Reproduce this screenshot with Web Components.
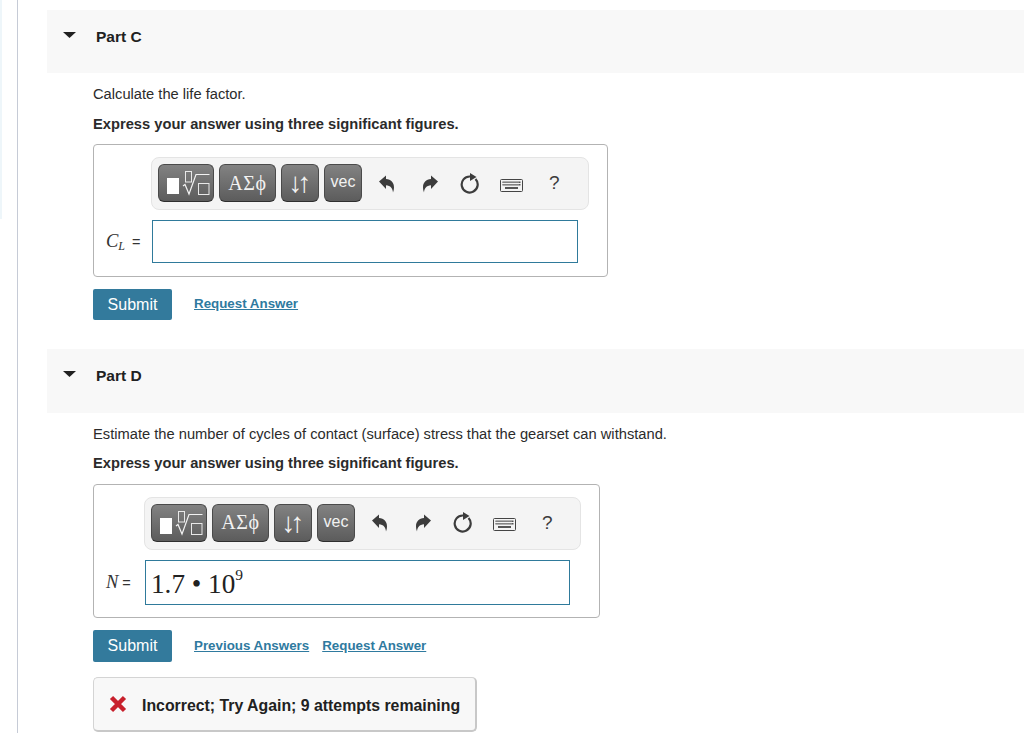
<!DOCTYPE html>
<html>
<head>
<meta charset="utf-8">
<title>Parts</title>
<style>
  html, body { margin: 0; padding: 0; background: #fff; }
  body { font-family: "Liberation Sans", Arial, sans-serif; color: #212121; height: 733px; overflow: hidden; }
</style>
</head>
<body>
<quiz-page>
  <quiz-part label="Part C" head="63">
    <p-text>Calculate the life factor.</p-text>
    <p-text bold>Express your answer using three significant figures.</p-text>
    <math-editor width="515" symbol="C" sub="L" indent="58"></math-editor>
    <answer-actions></answer-actions>
  </quiz-part>
  <quiz-part label="Part D" head="63.6">
    <p-text>Estimate the number of cycles of contact (surface) stress that the gearset can withstand.</p-text>
    <p-text bold>Express your answer using three significant figures.</p-text>
    <math-editor width="507" symbol="N" indent="51" value="1.7 • 10" sup="9"></math-editor>
    <answer-actions previous></answer-actions>
    <feedback-box>Incorrect; Try Again; 9 attempts remaining</feedback-box>
  </quiz-part>
</quiz-page>

<script>
class QuizPage extends HTMLElement {
  connectedCallback () {
    this.attachShadow({ mode: 'open' })
    this.shadowRoot.innerHTML = `
    <style>
      :host { display: flex; height: 733px; }
      .rail { width: 17px; flex: none; }
      .rail div { width: 2px; height: 219px; background: #eef6fa; }
      main { flex: 1; min-width: 0; border-left: 1px solid #c6cbd6; padding: 10px 0 0 29px; }
    </style>
    <div class="rail"><div></div></div>
    <main><slot></slot></main>`
  }
}

class QuizPart extends HTMLElement {
  connectedCallback () {
    this.attachShadow({ mode: 'open' })
    this.shadowRoot.innerHTML = `
    <style>
      :host { display: block; margin-bottom: 29px; }
      header { box-sizing: border-box; height: ${this.getAttribute('head')}px; background: #f8f8f8; display: flex; align-items: flex-start; padding-top: 18px; margin-bottom: 12px; }
      svg { margin: 4px 0 0 16px; width: 13px; height: 6px; flex: none; }
      h2 { margin: 0 0 0 20px; font: bold 15.5px/18px "Liberation Sans", Arial, sans-serif; color: #212121; }
      .body { margin-left: 46px; }
    </style>
    <header>
      <svg viewBox="0 0 13 6"><path d="M0 0h13L6.500 6z" fill="#212121"/></svg>
      <h2>${this.getAttribute('label')}</h2>
    </header>
    <div class="body"><slot></slot></div>`
  }
}

class PText extends HTMLElement {
  connectedCallback () {
    this.attachShadow({ mode: 'open' })
    const weight = this.hasAttribute('bold') ? 'bold' : 'normal'
    this.shadowRoot.innerHTML = `
    <style>
      :host { display: block; font: ${weight} 14.7px/18px "Liberation Sans", Arial, sans-serif; color: #2b2b2b; margin-bottom: 11.5px; }
    </style>
    <slot></slot>`
  }
}

class ToolButton extends HTMLElement {
  connectedCallback () {
    this.attachShadow({ mode: 'open' })
    this.shadowRoot.innerHTML = `
    <style>
      :host { display: flex; align-items: center; justify-content: center; box-sizing: border-box; height: 38px; overflow: hidden;
        border: 1px solid #4a4a4a; border-bottom-color: #2e2e2e; border-radius: 6px; color: #f2f2f2;
        background: linear-gradient(#828282, #5c5c5c); }
    </style>
    <slot></slot>`
  }
}

class MathEditor extends HTMLElement {
  connectedCallback () {
    this.attachShadow({ mode: 'open' })
    const sym = this.getAttribute('symbol')
    const sub = this.getAttribute('sub')
    const value = this.getAttribute('value') || ''
    const sup = this.getAttribute('sup')
    const indent = this.getAttribute('indent')
    this.shadowRoot.innerHTML = `
    <style>
      :host { display: block; box-sizing: border-box; width: ${this.getAttribute('width')}px; border: 1px solid #b3b3b3; border-radius: 4px;
        padding: 12px 0 ${sup ? 12 : 13}px ${indent - 1}px; margin: 0 0 12px; background: #fff; }
      .bar { display: flex; align-items: center; box-sizing: border-box; height: 53px; width: ${sup ? 437 : 438}px; padding: 0 6px 1px;
        background: #f4f4f4; border: 1px solid #e4e4e4; border-radius: 8px; }
      .btns { display: flex; gap: 5px; }
      .matrix { width: 56px; }
      .greek { width: 57px; font: 20px "Liberation Serif", serif; letter-spacing: .6px; }
      .arrows { width: 38px; font: 28px/30px "Liberation Sans", sans-serif; letter-spacing: -5px; padding-right: 5px; box-sizing: border-box; }
      .vec { width: 38px; font: 16px "Liberation Sans", Arial, sans-serif; padding-bottom: 2px; box-sizing: border-box; }
      .icons { display: flex; align-items: center; }
      .icons svg { display: block; fill: #3c3c3c; }
      .q { font: 19px "Liberation Sans", Arial, sans-serif; color: #3c3c3c; }
      .row { display: flex; align-items: center; margin-top: 10px; margin-left: ${-(indent - 13)}px; }
      label { width: ${indent - 12}px; flex: none; font: 14.5px "Liberation Sans", Arial, sans-serif; color: #333; white-space: nowrap; }
      label i { font: italic 18.5px "Liberation Serif", serif; }
      label sub { font: italic 12px "Liberation Serif", serif; vertical-align: -3px; line-height: 0; margin-right: 3px; }
      .field { box-sizing: border-box; width: ${sup ? 425 : 426}px; height: ${sup ? 45 : 43}px; border: 1px solid #2f7a9b; background: #fff;
        padding: 1px 0 0 5px; font: 27.2px/44px "Liberation Serif", serif; color: #222; white-space: nowrap; }
      .field sup { font-size: 15.5px; line-height: 0; vertical-align: 13px; }
    </style>
    <div class="bar">
      <div class="btns">
        <tool-button class="matrix">
          <svg width="54" height="36" viewBox="0 0 54 36" fill="none">
            <rect x="8" y="13" width="12" height="16" fill="#fff"/>
            <rect x="26.500" y="6.500" width="6" height="10.500" stroke="#e8e8e8"/>
            <path d="M24 21l2-1.500 4 9.500 7-19.500h13.500" stroke="#f2f2f2" stroke-width="1.200"/>
            <rect x="39.500" y="18.500" width="10.500" height="11" stroke="#e8e8e8"/>
          </svg>
        </tool-button>
        <tool-button class="greek">ΑΣϕ</tool-button>
        <tool-button class="arrows">↓↑</tool-button>
        <tool-button class="vec">vec</tool-button>
      </div>
      <div class="icons">
        <svg style="margin-left:17px" width="16" height="19" viewBox="0 0 16 19"><path d="M0 7.500L7 1.500v3.600c5 .3 8 3.400 8 8.400 0 1.700-.3 3.300-1 5-.3-4.300-2.400-7-7-7.300v3.800z"/></svg>
        <svg style="margin-left:27px" width="16" height="19" viewBox="0 0 16 19"><path d="M16 7.500L9 1.500v3.600c-5 .3-8 3.400-8 8.400 0 1.700.3 3.300 1 5 .3-4.300 2.400-7 7-7.300v3.800z"/></svg>
        <svg style="margin-left:22px;margin-top:1px" width="20" height="24" viewBox="0 0 20 24"><path d="M10 4.500A8 8 0 1 0 15.500 7" fill="none" stroke="#3c3c3c" stroke-width="2.200"/><path d="M10 1l6.500 4-6.500 4z"/></svg>
        <svg style="margin-left:20px;margin-top:4px" width="23" height="13" viewBox="0 0 23 13"><rect x=".5" y=".5" width="22" height="12" rx="1" fill="#f4f4f4" stroke="#444"/><path d="M2.500 2.500h18v1.500h-18zM2.500 5h18v1.500h-18zM5 8h13v2H5z" fill="#555"/><path d="M4 2.500v4M6 2.500v4M8 2.500v4M10 2.500v4M12 2.500v4M14 2.500v4M16 2.500v4M18 2.500v4" stroke="#f4f4f4" stroke-width=".6"/></svg>
        <span class="q" style="margin-left:26px">?</span>
      </div>
    </div>
    <div class="row">
      <label><i>${sym}</i>${sub ? `<sub>${sub}</sub>` : ''} =</label>
      <div class="field">${value}${sup ? `<sup>${sup}</sup>` : ''}</div>
    </div>`
  }
}

class AnswerActions extends HTMLElement {
  connectedCallback () {
    this.attachShadow({ mode: 'open' })
    const hasPrev = this.hasAttribute('previous')
    const prev = hasPrev ? '<a>Previous Answers</a>' : ''
    this.shadowRoot.innerHTML = `
    <style>
      :host { display: flex; align-items: center; height: ${hasPrev ? 32 : 31}px; }
      button { box-sizing: border-box; width: 79px; height: 100%; border: 0; border-radius: 2px; background: #337a9c; color: #fff;
        font: 16px "Liberation Sans", Arial, sans-serif; padding: 0; margin-right: 22px; }
      a { font: bold 13.350px "Liberation Sans", Arial, sans-serif; color: #2f7a9f; text-decoration: underline; margin: ${hasPrev ? -1 : -2}px 13px 0 0; }
    </style>
    <button>Submit</button>${prev}<a>Request Answer</a>`
  }
}

class FeedbackBox extends HTMLElement {
  connectedCallback () {
    this.attachShadow({ mode: 'open' })
    this.shadowRoot.innerHTML = `
    <style>
      :host { display: flex; align-items: center; box-sizing: border-box; width: 384px; height: 55px; margin-top: 15px; padding-top: 4px;
        background: #f8f8f8; border: 1px solid #d4d4d4; border-bottom: 2px solid #c8c8c8; border-right: 2px solid #c8c8c8; border-radius: 5px;
        font: bold 15.850px "Liberation Sans", Arial, sans-serif; color: #212121; white-space: nowrap; }
      svg { margin: -4px 15px 0 15px; flex: none; }
    </style>
    <svg width="18" height="18" viewBox="0 0 18 18"><path d="M2.500 2.500l13 13M15.500 2.500l-13 13" stroke="#c8202c" stroke-width="4.500"/></svg>
    <slot></slot>`
  }
}

window.customElements.define('quiz-page', QuizPage)
window.customElements.define('quiz-part', QuizPart)
window.customElements.define('p-text', PText)
window.customElements.define('tool-button', ToolButton)
window.customElements.define('math-editor', MathEditor)
window.customElements.define('answer-actions', AnswerActions)
window.customElements.define('feedback-box', FeedbackBox)
</script>
</body>
</html>
